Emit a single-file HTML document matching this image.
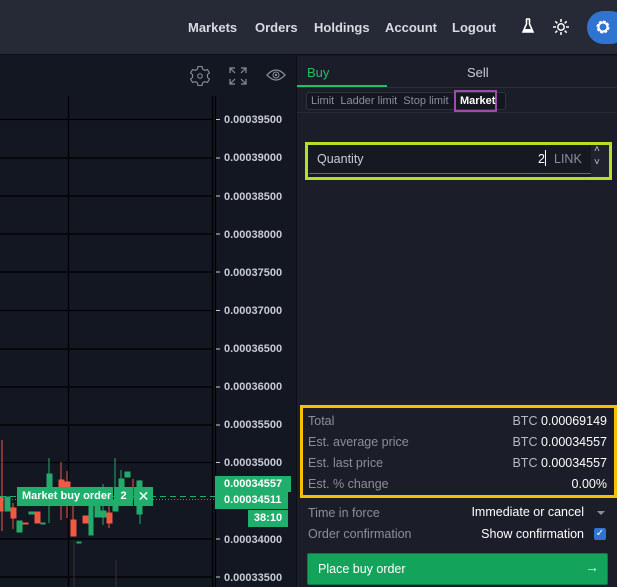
<!DOCTYPE html>
<html><head><meta charset="utf-8"><style>
*{margin:0;padding:0;box-sizing:border-box}
body{width:617px;height:587px;overflow:hidden;background:#131722;font-family:"Liberation Sans",sans-serif;position:relative}
.hdr{position:absolute;left:0;top:0;width:617px;height:55px;background:#262a37;border-bottom:1px solid #0e1018}
.nav{position:absolute;top:20px;font-size:13px;color:#d8dbe2;font-weight:bold}
.ax{position:absolute;left:224px;font-size:11px;color:#c9ccd3;font-weight:bold}
.rp{position:absolute;left:296px;top:56px;width:321px;height:531px;background:#1b1e29;border-left:1px solid #0d0f15}
.t{position:absolute;font-size:12.5px;white-space:nowrap}
.lbl{color:#8a8f9a}
.val{color:#fff}
</style></head><body>
<div class="hdr">
<span class="nav" style="left:188px">Markets</span>
<span class="nav" style="left:255px">Orders</span>
<span class="nav" style="left:314px">Holdings</span>
<span class="nav" style="left:385px">Account</span>
<span class="nav" style="left:452px">Logout</span>
<svg style="position:absolute;left:521px;top:18px" width="14" height="16" viewBox="0 0 14 16"><path d="M5 1h4M5.5 1v5L2 14h10L8.5 6V1" stroke="#fff" stroke-width="1.6" fill="none"/><path d="M3 11h8l1 3H2z" fill="#fff"/></svg>
<svg style="position:absolute;left:553px;top:19px" width="16" height="16" viewBox="0 0 16 16"><circle cx="8" cy="8" r="3.2" stroke="#fff" stroke-width="1.5" fill="none"/><path d="M8 0v3M8 13v3M0 8h3M13 8h3M2.3 2.3l2 2M11.7 11.7l2 2M2.3 13.7l2-2M11.7 4.3l2-2" stroke="#fff" stroke-width="1.5"/></svg>
<div style="position:absolute;left:587px;top:11px;width:40px;height:33px;border-radius:17px;background:#2f74d0"></div>
<svg style="position:absolute;left:594px;top:18px" width="18" height="18" viewBox="0 0 18 18"><circle cx="9" cy="9" r="5" stroke="#fff" stroke-width="3" fill="none" stroke-dasharray="2.5 1.4"/><circle cx="9" cy="9" r="4.5" stroke="#fff" stroke-width="2" fill="none"/></svg>
</div>
<svg style="position:absolute;left:189px;top:65px" width="22" height="22" viewBox="0 0 22 22"><path d="M9 1.5h4l.6 2.6 2.3 1.3 2.5-.9 2 3.4-2 1.8v2.6l2 1.8-2 3.4-2.5-.9-2.3 1.3-.6 2.6H9l-.6-2.6-2.3-1.3-2.5.9-2-3.4 2-1.8V9.7l-2-1.8 2-3.4 2.5.9 2.3-1.3z" stroke="#8a8f9a" stroke-width="1.1" fill="none"/><circle cx="11" cy="11" r="2.3" stroke="#8a8f9a" fill="none"/></svg>
<svg style="position:absolute;left:229px;top:67px" width="18" height="18" viewBox="0 0 18 18"><path d="M1 6V1h5M1 1l5 5M12 1h5v5M17 1l-5 5M1 12v5h5M1 17l5-5M17 12v5h-5M17 17l-5-5" stroke="#8a8f9a" stroke-width="1.2" fill="none"/></svg>
<svg style="position:absolute;left:266px;top:68px" width="20" height="14" viewBox="0 0 20 14"><path d="M1 7Q10-3 19 7Q10 17 1 7z" stroke="#8a8f9a" stroke-width="1.3" fill="none"/><circle cx="10" cy="7" r="3" stroke="#8a8f9a" fill="none"/><circle cx="10" cy="7" r="1.2" fill="#8a8f9a"/></svg>
<svg style="position:absolute;left:0;top:96px" width="296" height="491">
<g stroke="#000" stroke-width="1.3">
<line x1="68.5" y1="0" x2="68.5" y2="491"/><line x1="212.5" y1="0" x2="212.5" y2="491"/><line x1="215.5" y1="0" x2="215.5" y2="491"/>
<line x1="0" y1="23.5" x2="212" y2="23.5"/><line x1="0" y1="62" x2="212" y2="62"/><line x1="0" y1="100" x2="212" y2="100"/><line x1="0" y1="138" x2="212" y2="138"/><line x1="0" y1="176" x2="212" y2="176"/><line x1="0" y1="214.5" x2="212" y2="214.5"/><line x1="0" y1="253" x2="212" y2="253"/><line x1="0" y1="291" x2="212" y2="291"/><line x1="0" y1="329" x2="212" y2="329"/><line x1="0" y1="366.5" x2="212" y2="366.5"/><line x1="0" y1="443" x2="212" y2="443"/><line x1="0" y1="481" x2="212" y2="481"/>
</g>
<g stroke="#c9ccd3"><line x1="216" y1="23.5" x2="220" y2="23.5"/><line x1="216" y1="62" x2="220" y2="62"/><line x1="216" y1="100" x2="220" y2="100"/><line x1="216" y1="138" x2="220" y2="138"/><line x1="216" y1="176" x2="220" y2="176"/><line x1="216" y1="214.5" x2="220" y2="214.5"/><line x1="216" y1="253" x2="220" y2="253"/><line x1="216" y1="291" x2="220" y2="291"/><line x1="216" y1="329" x2="220" y2="329"/><line x1="216" y1="366.5" x2="220" y2="366.5"/><line x1="216" y1="443" x2="220" y2="443"/><line x1="216" y1="481" x2="220" y2="481"/></g>
<g transform="translate(0,-96)">
<line x1="74" y1="540" x2="74" y2="587" stroke="#333"/><line x1="116" y1="560" x2="116" y2="587" stroke="#333"/>
<g fill="#ef5a42" stroke="#ef5a42">
<line x1="2" y1="440" x2="2" y2="531"/><rect x="0" y="497" width="3" height="14"/>
<line x1="13" y1="503" x2="13" y2="529"/><rect x="11" y="508" width="5" height="10"/>
<rect x="23" y="523" width="5" height="1"/>
<rect x="35" y="512" width="5" height="11"/>
<line x1="61" y1="462" x2="61" y2="520"/><rect x="59" y="480" width="5" height="8"/>
<line x1="67" y1="471" x2="67" y2="518"/><rect x="65" y="482" width="5" height="6"/>
<line x1="73" y1="490" x2="73" y2="536"/><rect x="71" y="520" width="5" height="16"/>
<rect x="83" y="516" width="5" height="7"/>
<line x1="109" y1="505" x2="109" y2="528"/><rect x="107" y="513" width="5" height="10"/>
<line x1="133" y1="479" x2="133" y2="500"/>
</g>
<g fill="#22ab6a" stroke="#22ab6a">
<rect x="5" y="497" width="5" height="14"/>
<rect x="17" y="521" width="5" height="11"/>
<rect x="29" y="512" width="5" height="2"/>
<rect x="41" y="523" width="4" height="1"/>
<line x1="49" y1="458" x2="49" y2="523"/><rect x="47" y="474" width="5" height="16"/>
<rect x="77" y="542" width="4" height="1"/>
<rect x="89" y="505" width="4" height="30"/>
<rect x="95" y="505" width="5" height="12"/>
<line x1="103" y1="484" x2="103" y2="525"/><rect x="101" y="511" width="5" height="6"/>
<line x1="115" y1="458" x2="115" y2="511"/><rect x="113" y="500" width="5" height="11"/>
<line x1="121" y1="470" x2="121" y2="500"/><rect x="119" y="479" width="5" height="11"/>
<rect x="125" y="472" width="5" height="5"/>
<line x1="140" y1="480" x2="140" y2="524"/><rect x="137" y="481" width="5" height="33"/>
</g>
<line x1="0" y1="496.5" x2="215" y2="496.5" stroke="#22ab6a" stroke-dasharray="6 4"/>
<line x1="0" y1="499.5" x2="215" y2="499.5" stroke="#22ab6a" stroke-dasharray="1 2"/>
</g>
</svg>
<div class="ax" style="top:114px">0.00039500</div>
<div class="ax" style="top:152px">0.00039000</div>
<div class="ax" style="top:191px">0.00038500</div>
<div class="ax" style="top:229px">0.00038000</div>
<div class="ax" style="top:267px">0.00037500</div>
<div class="ax" style="top:305px">0.00037000</div>
<div class="ax" style="top:343px">0.00036500</div>
<div class="ax" style="top:381px">0.00036000</div>
<div class="ax" style="top:419px">0.00035500</div>
<div class="ax" style="top:457px">0.00035000</div>
<div class="ax" style="top:534px">0.00034000</div>
<div class="ax" style="top:572px">0.00033500</div>
<div style="position:absolute;left:215px;top:476px;width:76px;height:16px;background:#1fae6b"></div>
<div class="ax" style="top:478px;color:#fff">0.00034557</div>
<div style="position:absolute;left:215px;top:492px;width:73px;height:17px;background:#1fae6b"></div>
<div class="ax" style="top:494px;color:#fff">0.00034511</div>
<div style="position:absolute;left:248px;top:510px;width:40px;height:17px;background:#1fae6b;color:#fff;font-size:11px;font-weight:bold;text-align:center;line-height:17px">38:10</div>
<div style="position:absolute;left:17px;top:487px;height:19px;white-space:nowrap;color:#fff;font-size:11px;font-weight:bold;line-height:19px">
<span style="position:absolute;left:0;top:0;background:#1fae6b;width:96px;padding-left:5px">Market buy order</span><span style="position:absolute;left:97px;top:0;background:#1fae6b;width:19px;text-align:center">2</span><span style="position:absolute;left:117px;top:0;background:#1fae6b;width:19px;text-align:center;font-size:14px;font-weight:normal">✕</span></div>
<div class="rp">
<div class="t" style="left:10px;top:9px;color:#22c064;font-size:13px">Buy</div>
<div class="t" style="left:170px;top:9px;color:#c9ccd3;font-size:13px">Sell</div>
<div style="position:absolute;left:0;top:29px;width:90px;height:2px;background:#22c064"></div>
<div style="position:absolute;left:0;top:31px;width:321px;height:1px;background:#2b2f3a"></div>
<div style="position:absolute;left:9px;top:36px;width:200px;height:18px;border:1px solid #2f3340;border-radius:3px;background:#14171f"></div>
<div class="t" style="left:14px;top:39px;font-size:11px;color:#8a8f9a">Limit&nbsp; Ladder limit&nbsp; Stop limit</div>
<div style="position:absolute;left:157px;top:34px;width:43px;height:22px;border:2px solid #9b4ea6"></div>
<div class="t" style="left:163px;top:39px;font-size:11px;color:#fff;font-weight:bold">Market</div>
<div style="position:absolute;left:0;top:56px;width:321px;height:1px;background:#262a35"></div>
<div style="position:absolute;left:8px;top:86px;width:307px;height:38px;border:3px solid #b6e022;background:#161922"></div>
<div style="position:absolute;left:12px;top:117px;width:282px;height:1px;background:#2f74d0"></div>
<div style="position:absolute;left:294px;top:89px;width:18px;height:32px;background:#20232e"></div>
<div class="t" style="left:20px;top:96px;color:#c9ccd3">Quantity</div>
<div class="t" style="left:241px;top:96px;color:#fff">2</div>
<div style="position:absolute;left:248px;top:94px;width:1px;height:16px;background:#fff"></div>
<div class="t" style="left:257px;top:96px;color:#8a8f9a">LINK</div>
<div class="t" style="left:297px;top:88px;color:#c9ccd3;font-size:10px">˄</div>
<div class="t" style="left:297px;top:101px;color:#c9ccd3;font-size:10px">˅</div>
<div style="position:absolute;left:3px;top:349px;width:317px;height:93px;border:3px solid #f5c000"></div>
<div class="t lbl" style="left:11px;top:358px">Total</div><div class="t" style="right:10px;top:358px"><span style="color:#b5b9c2">BTC </span><span class="val">0.00069149</span></div>
<div class="t lbl" style="left:11px;top:379px">Est. average price</div><div class="t" style="right:10px;top:379px"><span style="color:#b5b9c2">BTC </span><span class="val">0.00034557</span></div>
<div class="t lbl" style="left:11px;top:400px">Est. last price</div><div class="t" style="right:10px;top:400px"><span style="color:#b5b9c2">BTC </span><span class="val">0.00034557</span></div>
<div class="t lbl" style="left:11px;top:421px">Est. % change</div><div class="t val" style="right:10px;top:421px">0.00%</div>
<div class="t lbl" style="left:11px;top:450px">Time in force</div><div class="t val" style="right:33px;top:449px">Immediate or cancel</div>
<div style="position:absolute;right:12px;top:455px;border:4px solid transparent;border-top:4px solid #8a8f9a"></div>
<div class="t lbl" style="left:11px;top:471px">Order confirmation</div><div class="t val" style="right:33px;top:471px">Show confirmation</div>
<div style="position:absolute;right:11px;top:472px;width:12px;height:12px;background:#2f74d0;border-radius:2px;color:#fff;font-size:10px;line-height:12px;text-align:center">✓</div>
<div style="position:absolute;left:10px;top:497px;width:301px;height:32px;background:#14a35a;border:1px solid #0f7a44;border-radius:2px"></div>
<div class="t val" style="left:21px;top:506px">Place buy order</div>
<div class="t" style="right:18px;top:503px;color:#cfe;font-size:14px">→</div>
</div>
</body></html>
